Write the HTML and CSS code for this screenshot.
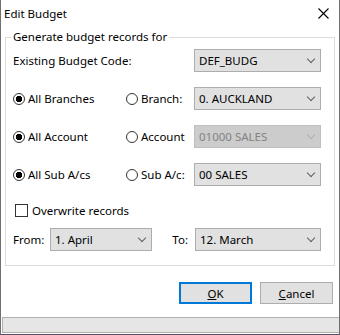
FILE: index.html
```html
<!DOCTYPE html>
<html lang="en">
<head>
  <meta charset="UTF-8" />
  <title>Edit Budget</title>
  <link rel="stylesheet" href="styles.css">
</head>
<body>
  <div class="window">
    <!-- Title bar -->
    <div class="titlebar">
      <span class="title">Edit Budget</span>
      <svg class="close" width="11" height="11" viewBox="0 0 11 11">
        <path d="M0.5 0.5 L10.5 10.5 M10.5 0.5 L0.5 10.5" stroke="#000" stroke-width="1.1" fill="none"/>
      </svg>
    </div>

    <div class="content">
      <fieldset class="group">
        <legend>Generate budget records for</legend>

        <div class="row">
          <span class="label wide">Existing Budget Code:</span>
          <div class="select"><span>DEF_BUDG</span><i class="chev"></i></div>
        </div>

        <div class="row">
          <span class="radio checked">All Branches</span>
          <span class="radio">Branch:</span>
          <div class="select"><span>0. AUCKLAND</span><i class="chev"></i></div>
        </div>

        <div class="row">
          <span class="radio checked">All Account</span>
          <span class="radio">Account</span>
          <div class="select disabled"><span>01000 SALES</span><i class="chev"></i></div>
        </div>

        <div class="row">
          <span class="radio checked">All Sub A/cs</span>
          <span class="radio">Sub A/c:</span>
          <div class="select"><span>00 SALES</span><i class="chev"></i></div>
        </div>

        <div class="check-row">
          <span class="checkbox"></span>
          <span>Overwrite records</span>
        </div>

        <div class="range-row">
          <span class="from-label">From:</span>
          <div class="select from"><span>1. April</span><i class="chev"></i></div>
          <span class="to-label">To:</span>
          <div class="select to"><span>12. March</span><i class="chev"></i></div>
        </div>
      </fieldset>

      <div class="buttons">
        <button class="btn default"><u>O</u>K</button>
        <button class="btn"><u>C</u>ancel</button>
      </div>
    </div>

    <div class="statusbar"></div>
  </div>
</body>
</html>
```

FILE: styles.css
```css
* {
  margin: 0;
  padding: 0;
  box-sizing: border-box;
}
body {
  font-family: "Segoe UI", "Noto Sans", Arial, sans-serif;
  font-size: 11.5px;
  color: #000;
  background: #fff;
}
.window {
  width: 340px;
  height: 335px;
  border-left: 1px solid #6f6f6f;
  border-right: 1px solid #6f6f6f;
  border-bottom: 1px solid #5a4f66;
  display: flex;
  flex-direction: column;
  background: #fff;
}
.titlebar {
  height: 29px;
  display: flex;
  align-items: center;
  justify-content: space-between;
  padding: 0 10px 3px 3px;
}
.title {
  font-size: 11.5px;
}
.content {
  flex: 1;
  padding: 0 5px 0 4px;
}
.group {
  border: 1px solid #dcdcdc;
  padding: 4px 13px 14px 7px;
  margin: 0;
}
.group legend {
  padding: 0 2px;
  margin-left: -2px;
  line-height: 16px;
}
.row {
  display: grid;
  grid-template-columns: 113px 68px 127px;
  align-items: center;
  height: 23px;
  margin-bottom: 15px;
}
.label.wide {
  grid-column: 1 / 3;
}
.radio {
  display: flex;
  align-items: center;
  gap: 3px;
  white-space: nowrap;
}
.radio::before {
  content: "";
  width: 12px;
  height: 12px;
  border: 1px solid #333;
  border-radius: 50%;
  flex: none;
  box-sizing: border-box;
}
.radio.checked::before {
  background: radial-gradient(circle, #000 0 3px, #fff 3.5px);
}
.select {
  height: 23px;
  background: #e1e1e1;
  border: 1px solid #adadad;
  display: flex;
  align-items: center;
  justify-content: space-between;
  padding: 0 6px 0 4px;
}
.select.disabled {
  background: #cccccc;
  border-color: #bfbfbf;
  color: #838383;
}
.chev {
  width: 6px;
  height: 6px;
  border-right: 1px solid #606060;
  border-bottom: 1px solid #606060;
  transform: rotate(45deg);
  margin-top: -4px;
}
.select.disabled .chev {
  border-color: #b0b0b0;
}
.check-row {
  display: flex;
  align-items: center;
  gap: 4px;
  margin: 18px 0 0 2px;
  height: 13px;
}
.checkbox {
  width: 13px;
  height: 13px;
  border: 1px solid #333;
  background: #fff;
}
.range-row {
  display: flex;
  align-items: center;
  margin-top: 11px;
}
.from-label {
  width: 37px;
}
.select.from {
  width: 102px;
}
.to-label {
  width: 43px;
  text-align: right;
  padding-right: 7px;
}
.select.to {
  width: 126px;
}
.buttons {
  display: flex;
  justify-content: flex-end;
  gap: 8px;
  padding: 16px 1px 0 0;
}
.btn {
  width: 73px;
  height: 22px;
  background: #e1e1e1;
  border: 1px solid #adadad;
  font-family: inherit;
  font-size: 11.5px;
  color: #000;
}
.btn.default {
  border: 2px solid #0078d7;
}
.statusbar {
  height: 16px;
  margin: 0 0 1px 1px;
  background: #e6e6e6;
  border: 1px solid #b0b0b0;
  border-right: none;
}
```
